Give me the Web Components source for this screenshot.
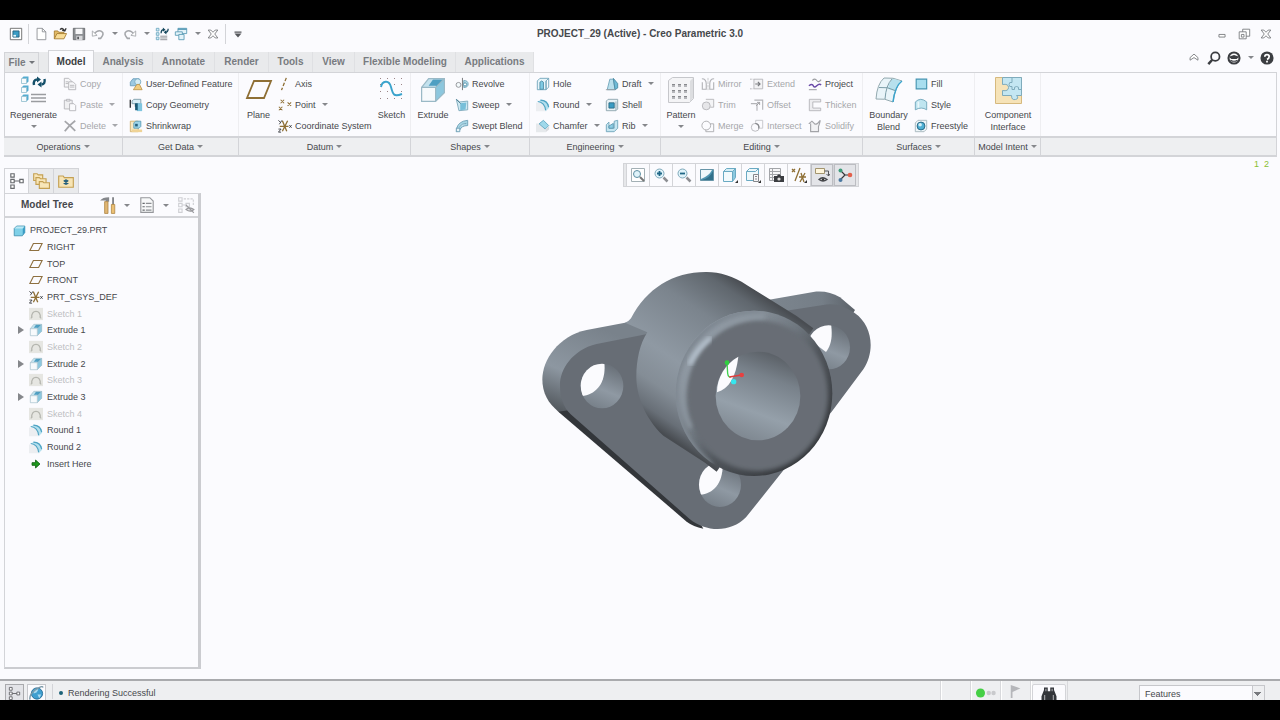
<!DOCTYPE html>
<html lang="en">
<head>
  <meta charset="UTF-8">
  <title>PROJECT_29 (Active) - Creo Parametric 3.0</title>
  <style>
    html, body {
      height: 100%;
      margin: 0;
    }
    body {
      background: #000;
      font: 9px/12px "Liberation Sans", Arial, sans-serif;
      color: #46484c;
      --bg: #fbfbfe;
      --bar: #eeeff1;
      --line: #d3d4d8;
      --muted: #a6a7ab;
    }
  </style>
</head>
<body>
  <cad-app></cad-app>

  <template id="cad-app">
    <style>
      :host {
        display: flex;
        flex-direction: column;
        height: 100vh;
        box-sizing: border-box;
        padding: 20px 0;
        overflow: hidden;
      }
      main {
        flex: 1;
        min-height: 0;
        display: flex;
        background: var(--bg);
      }
      cad-viewport {
        flex: 1;
        min-width: 0;
      }
    </style>
    <cad-titlebar></cad-titlebar>
    <cad-ribbon></cad-ribbon>
    <main>
      <cad-model-tree></cad-model-tree>
      <cad-viewport></cad-viewport>
    </main>
    <cad-status></cad-status>
  </template>

  <template id="cad-titlebar">
    <style>
      :host {
        display: grid;
        grid-template-columns: 1fr auto 1fr;
        align-items: center;
        height: 27px;
        background: var(--bg);
      }
      h1 {
        margin: 0;
        font-size: 10px;
        line-height: 12px;
      }
      div {
        display: flex;
        align-items: center;
      }
      .quick {
        padding-left: 9px;
        gap: 5px;
      }
      .window {
        justify-content: flex-end;
        gap: 8px;
        padding-right: 7px;
      }
      i {
        width: 1px;
        height: 20px;
        background: var(--line);
      }
    </style>
    <div class="quick">
      <cad-tool icon="app" label="Window"></cad-tool>
      <i></i>
      <cad-tool icon="new" label="New"></cad-tool>
      <cad-tool icon="open" label="Open"></cad-tool>
      <cad-tool icon="save" label="Save"></cad-tool>
      <cad-tool icon="undo" label="Undo" menu></cad-tool>
      <cad-tool icon="redo" label="Redo" menu></cad-tool>
      <cad-tool icon="regen" label="Regenerate"></cad-tool>
      <cad-tool icon="windows" label="Windows" menu></cad-tool>
      <cad-tool icon="close" label="Close"></cad-tool>
      <i></i>
      <cad-tool icon="custom" label="Customize"></cad-tool>
    </div>
    <h1>PROJECT_29 (Active) - Creo Parametric 3.0</h1>
    <div class="window">
      <cad-tool icon="minimize" label="Minimize"></cad-tool>
      <cad-tool icon="restore" label="Restore"></cad-tool>
      <cad-tool icon="close" label="Close window"></cad-tool>
    </div>
  </template>

  <template id="cad-tool">
    <style>
      :host {
        display: block;
      }
      button {
        display: flex;
        align-items: center;
        gap: 7px;
        margin: 0;
        padding: 0;
        border: 0;
        background: none;
      }
      .arrow {
        display: none;
        border: 3px solid transparent;
        border-top-color: #85878b;
        border-bottom: 0;
      }
      :host([menu]) .arrow {
        display: block;
      }
    </style>
    <button><cad-icon></cad-icon><span class="arrow"></span></button>
  </template>

  <template id="cad-ribbon">
    <style>
      :host {
        display: block;
        padding: 0 3px 0 4px;
        background: var(--bg);
      }
      .top {
        display: flex;
        height: 25px;
        align-items: flex-end;
      }
      nav {
        display: flex;
        align-items: flex-end;
        background: linear-gradient(var(--bg) 2px, #e9eaec 2px);
      }
      .side {
        display: flex;
        align-items: center;
        align-self: flex-start;
        gap: 6px;
        height: 21px;
        margin-left: auto;
        padding-right: 3px;
      }
      .groups {
        display: flex;
        border: 1px solid var(--line);
        border-bottom: 2px solid var(--line);
      }
      .groups cad-group:first-child {
        margin-left: -1px;
      }
      .rest {
        flex: 1;
        display: flex;
        flex-direction: column;
        justify-content: flex-end;
      }
      .rest::after {
        content: "";
        height: 17px;
        border-top: 2px solid var(--line);
        background: var(--bar);
      }
    </style>
    <div class="top">
      <nav role="tablist">
        <cad-tab file style="--w: 35px">File</cad-tab>
        <cad-tab active style="--w: 46px">Model</cad-tab>
        <cad-tab style="--w: 59px">Analysis</cad-tab>
        <cad-tab style="--w: 62px">Annotate</cad-tab>
        <cad-tab style="--w: 54px">Render</cad-tab>
        <cad-tab style="--w: 44px">Tools</cad-tab>
        <cad-tab style="--w: 42px">View</cad-tab>
        <cad-tab style="--w: 101px">Flexible Modeling</cad-tab>
        <cad-tab style="--w: 78px">Applications</cad-tab>
      </nav>
      <div class="side">
        <cad-tool icon="collapse" label="Minimize the ribbon"></cad-tool>
        <cad-tool icon="search" label="Search"></cad-tool>
        <cad-tool icon="learn" label="Learning Connector" menu></cad-tool>
        <cad-tool icon="help" label="Help"></cad-tool>
      </div>
    </div>
    <div class="groups">
      <cad-group name="Operations">
        <cad-big icon="regenerate" menu style="--w: 59px">Regenerate</cad-big>
        <cad-column style="--w: 60px">
          <cad-command icon="copy" disabled>Copy</cad-command>
          <cad-command icon="paste" disabled menu>Paste</cad-command>
          <cad-command icon="delete" disabled menu>Delete</cad-command>
        </cad-column>
      </cad-group>
      <cad-group name="Get Data">
        <cad-column inset style="--w: 116px">
          <cad-command icon="udf">User-Defined Feature</cad-command>
          <cad-command icon="copygeom">Copy Geometry</cad-command>
          <cad-command icon="shrinkwrap">Shrinkwrap</cad-command>
        </cad-column>
      </cad-group>
      <cad-group name="Datum">
        <cad-big icon="plane" style="--w: 39px">Plane</cad-big>
        <cad-column style="--w: 94px">
          <cad-command icon="axis">Axis</cad-command>
          <cad-command icon="point" menu>Point</cad-command>
          <cad-command icon="csys">Coordinate System</cad-command>
        </cad-column>
        <cad-big icon="sketch" style="--w: 39px">Sketch</cad-big>
      </cad-group>
      <cad-group name="Shapes">
        <cad-big icon="extrude" style="--w: 44px">Extrude</cad-big>
        <cad-column style="--w: 75px">
          <cad-command icon="revolve">Revolve</cad-command>
          <cad-command icon="sweep" menu>Sweep</cad-command>
          <cad-command icon="swept">Swept Blend</cad-command>
        </cad-column>
      </cad-group>
      <cad-group name="Engineering">
        <cad-column inset style="--w: 75px">
          <cad-command icon="hole">Hole</cad-command>
          <cad-command icon="round" menu>Round</cad-command>
          <cad-command icon="chamfer" menu>Chamfer</cad-command>
        </cad-column>
        <cad-column style="--w: 56px">
          <cad-command icon="draft" menu>Draft</cad-command>
          <cad-command icon="shell">Shell</cad-command>
          <cad-command icon="rib" menu>Rib</cad-command>
        </cad-column>
      </cad-group>
      <cad-group name="Editing">
        <cad-big icon="pattern" menu style="--w: 40px">Pattern</cad-big>
        <cad-column style="--w: 49px">
          <cad-command icon="mirror" disabled>Mirror</cad-command>
          <cad-command icon="trim" disabled>Trim</cad-command>
          <cad-command icon="merge" disabled>Merge</cad-command>
        </cad-column>
        <cad-column style="--w: 58px">
          <cad-command icon="extend" disabled>Extend</cad-command>
          <cad-command icon="offset" disabled>Offset</cad-command>
          <cad-command icon="intersect" disabled>Intersect</cad-command>
        </cad-column>
        <cad-column style="--w: 55px">
          <cad-command icon="project">Project</cad-command>
          <cad-command icon="thicken" disabled>Thicken</cad-command>
          <cad-command icon="solidify" disabled>Solidify</cad-command>
        </cad-column>
      </cad-group>
      <cad-group name="Surfaces">
        <cad-big icon="boundary" style="--w: 51px">Boundary<br>Blend</cad-big>
        <cad-column style="--w: 61px">
          <cad-command icon="fill">Fill</cad-command>
          <cad-command icon="style">Style</cad-command>
          <cad-command icon="freestyle">Freestyle</cad-command>
        </cad-column>
      </cad-group>
      <cad-group name="Model Intent">
        <cad-big icon="component" style="--w: 66px">Component<br>Interface</cad-big>
      </cad-group>
      <div class="rest"></div>
    </div>
  </template>

  <template id="cad-tab">
    <style>
      :host {
        display: block;
        width: var(--w);
      }
      button {
        display: flex;
        align-items: center;
        justify-content: center;
        gap: 3px;
        width: 100%;
        height: 20px;
        margin: 0;
        padding: 0;
        border: 0;
        border-right: 1px solid #dfe0e3;
        background: #e9eaec;
        font: bold 10px/12px "Liberation Sans", Arial, sans-serif;
        color: #787b80;
        white-space: nowrap;
      }
      :host([active]) button {
        height: 22px;
        border: 1px solid var(--line);
        border-bottom: 0;
        background: var(--bg);
        color: #3c3e42;
      }
      :host([file]) {
        margin-right: 9px;
      }
      :host([file]) button {
        border: 1px solid var(--line);
        border-bottom: 0;
      }
      :host([file]) button::after {
        content: "";
        border: 3px solid transparent;
        border-top-color: #72757a;
        border-bottom: 0;
      }
    </style>
    <button role="tab"><slot></slot></button>
  </template>

  <template id="cad-group">
    <style>
      :host {
        display: block;
      }
      .body {
        display: flex;
        height: 63px;
        box-shadow: inset -1px 0 #eeeef1;
      }
      button {
        display: flex;
        align-items: center;
        justify-content: center;
        gap: 3px;
        width: 100%;
        height: 19px;
        margin: 0;
        padding: 0;
        border: 0;
        border-top: 2px solid var(--line);
        border-right: 1px solid var(--line);
        background: var(--bar);
        font: 9px/12px "Liberation Sans", Arial, sans-serif;
        color: inherit;
        white-space: nowrap;
      }
      button::after {
        content: "";
        border: 3px solid transparent;
        border-top-color: #85878b;
        border-bottom: 0;
      }
    </style>
    <div class="body"><slot></slot></div>
    <button></button>
  </template>

  <template id="cad-column">
    <style>
      :host {
        display: flex;
        flex-direction: column;
        box-sizing: border-box;
        width: var(--w);
      }
      :host([inset]) {
        padding-left: 6px;
      }
    </style>
    <slot></slot>
  </template>

  <template id="cad-command">
    <style>
      :host {
        display: block;
      }
      button {
        display: flex;
        align-items: center;
        gap: 3px;
        height: 21px;
        margin: 0;
        padding: 0;
        border: 0;
        background: none;
        font: 9px/12px "Liberation Sans", Arial, sans-serif;
        color: inherit;
        white-space: nowrap;
      }
      :host([disabled]) button {
        color: var(--muted);
      }
      :host([menu]) button::after {
        content: "";
        margin-left: 3px;
        border: 3px solid transparent;
        border-top-color: #85878b;
        border-bottom: 0;
      }
      :host([menu][disabled]) button::after {
        border-top-color: var(--muted);
      }
    </style>
    <button><cad-icon></cad-icon><span><slot></slot></span></button>
  </template>

  <template id="cad-big">
    <style>
      :host {
        display: block;
        width: var(--w);
      }
      button {
        display: flex;
        flex-direction: column;
        align-items: center;
        width: 100%;
        margin: 0;
        padding: 3px 0 0;
        border: 0;
        background: none;
        font: 9px/12px "Liberation Sans", Arial, sans-serif;
        color: inherit;
      }
      cad-icon {
        --size: 28px;
        margin-bottom: 5px;
      }
      span {
        white-space: nowrap;
      }
      :host([menu]) button::after {
        content: "";
        margin-top: 4px;
        border: 3px solid transparent;
        border-top-color: #85878b;
        border-bottom: 0;
      }
    </style>
    <button><cad-icon></cad-icon><span><slot></slot></span></button>
  </template>

  <template id="cad-model-tree">
    <style>
      :host {
        display: flex;
        flex-direction: column;
        width: 197px;
        padding: 11px 0 10px 4px;
      }
      .tabs {
        display: flex;
      }
      .tabs cad-tool {
        display: grid;
        place-items: center;
        box-sizing: border-box;
        width: 25px;
        height: 25px;
        border: 1px solid var(--line);
        border-width: 1px 1px 0 0;
        background: #e9eaec;
        --size: 18px;
      }
      .tabs cad-tool:first-child {
        border-left-width: 1px;
        background: var(--bg);
      }
      .panel {
        flex: 1;
        border: 1px solid var(--line);
        border-right: 3px solid #cbccd0;
        border-bottom: 2px solid #cbccd0;
      }
      header {
        display: flex;
        align-items: center;
        gap: 8px;
        height: 22px;
        padding: 0 3px 0 16px;
        border-bottom: 2px solid var(--line);
        --size: 18px;
      }
      h2 {
        flex: 1;
        margin: 0;
        font-size: 10px;
        line-height: 12px;
      }
      ul {
        display: grid;
        grid-auto-rows: 1fr;
        height: 250px;
        margin: 0;
        padding: 4px 0 0 8px;
        list-style: none;
      }
    </style>
    <div class="tabs">
      <cad-tool icon="tree" label="Model Tree"></cad-tool>
      <cad-tool icon="folders" label="Folder Browser"></cad-tool>
      <cad-tool icon="favorites" label="Favorites"></cad-tool>
    </div>
    <div class="panel">
      <header>
        <h2>Model Tree</h2>
        <cad-tool icon="settings" label="Settings" menu></cad-tool>
        <cad-tool icon="show" label="Show" menu></cad-tool>
        <cad-tool icon="hidetree" label="Hide tree"></cad-tool>
      </header>
      <ul role="tree">
        <cad-node root icon="part">PROJECT_29.PRT</cad-node>
        <cad-node icon="datum">RIGHT</cad-node>
        <cad-node icon="datum">TOP</cad-node>
        <cad-node icon="datum">FRONT</cad-node>
        <cad-node icon="csys">PRT_CSYS_DEF</cad-node>
        <cad-node icon="section" hushed>Sketch 1</cad-node>
        <cad-node icon="extrude" parent>Extrude 1</cad-node>
        <cad-node icon="section" hushed>Sketch 2</cad-node>
        <cad-node icon="extrude" parent>Extrude 2</cad-node>
        <cad-node icon="section" hushed>Sketch 3</cad-node>
        <cad-node icon="extrude" parent>Extrude 3</cad-node>
        <cad-node icon="section" hushed>Sketch 4</cad-node>
        <cad-node icon="round">Round 1</cad-node>
        <cad-node icon="round">Round 2</cad-node>
        <cad-node icon="insert">Insert Here</cad-node>
      </ul>
    </div>
  </template>

  <template id="cad-node">
    <style>
      :host {
        display: flex;
        align-items: center;
        gap: 4px;
        white-space: nowrap;
      }
      .twist {
        box-sizing: border-box;
        width: 12px;
        height: 8px;
      }
      :host([parent]) .twist {
        border: 4px solid transparent;
        border-left: 6px solid #85878b;
        border-right: 0;
        width: 6px;
        margin: 0 1px 0 5px;
      }
      :host([root]) .twist {
        display: none;
      }
      :host([root]) {
        --size: 13px;
      }
      :host([hushed]) {
        color: #bdbec2;
      }
    </style>
    <span class="twist"></span>
    <cad-icon></cad-icon>
    <span><slot></slot></span>
  </template>

  <template id="cad-viewport">
    <style>
      :host {
        display: flex;
        flex-direction: column;
      }
      .head {
        display: grid;
        grid-template-columns: 1fr auto 1fr;
        height: 30px;
      }
      .bar {
        grid-column: 2;
        display: flex;
        height: 22px;
        margin-top: 6px;
        padding: 0 2px;
        border: 1px solid var(--line);
        background: #e6e7ea;
      }
      .bar cad-tool {
        display: grid;
        place-items: center;
        width: 22px;
        border-left: 1px solid var(--line);
        background: var(--bg);
        --size: 16px;
      }
      .bar cad-tool[pressed] {
        background: #e3e4e8;
        box-shadow: inset 0 0 0 1px #bcbdc2;
      }
      output {
        justify-self: end;
        padding: 1px 11px 0 0;
        color: #8cbf33;
      }
      svg {
        flex: 1;
        width: 100%;
        min-height: 0;
      }
    </style>
    <div class="head">
      <div class="bar">
        <cad-tool icon="refit" label="Refit"></cad-tool>
        <cad-tool icon="zoomin" label="Zoom In"></cad-tool>
        <cad-tool icon="zoomout" label="Zoom Out"></cad-tool>
        <cad-tool icon="repaint" label="Repaint"></cad-tool>
        <cad-tool icon="shading" label="Display Style"></cad-tool>
        <cad-tool icon="views" label="Saved Orientations"></cad-tool>
        <cad-tool icon="manager" label="View Manager"></cad-tool>
        <cad-tool icon="datums" label="Datum Display Filters"></cad-tool>
        <cad-tool icon="notes" label="Annotation Display" pressed></cad-tool>
        <cad-tool icon="spin" label="Spin Center" pressed></cad-tool>
      </div>
      <output>1&nbsp; 2</output>
    </div>
    <svg viewBox="201 187 1079 492" role="img" aria-label="Flanged bracket">
      <defs>
        <linearGradient id="body" gradientUnits="userSpaceOnUse" x1="650" y1="75" x2="368" y2="500">
          <stop offset="0" stop-color="#494d52"/>
          <stop offset=".08" stop-color="#60676e"/>
          <stop offset=".28" stop-color="#7b848d"/>
          <stop offset=".6" stop-color="#8f99a3"/>
          <stop offset=".78" stop-color="#848d96"/>
          <stop offset=".92" stop-color="#686f77"/>
          <stop offset="1" stop-color="#484c51"/>
        </linearGradient>
        <linearGradient id="rim" gradientUnits="userSpaceOnUse" x1="500" y1="230" x2="850" y2="570">
          <stop offset="0" stop-color="#97a1ab"/>
          <stop offset=".4" stop-color="#6f777f"/>
          <stop offset=".6" stop-color="#50555b"/>
          <stop offset="1" stop-color="#34373b"/>
        </linearGradient>
        <linearGradient id="bore" x1=".75" y1="0" x2=".4" y2="1">
          <stop offset="0" stop-color="#565b61"/>
          <stop offset=".3" stop-color="#78818a"/>
          <stop offset=".7" stop-color="#95a0aa"/>
          <stop offset="1" stop-color="#7f8891"/>
        </linearGradient>
        <linearGradient id="hole" x1=".8" y1="0" x2=".4" y2="1">
          <stop offset="0" stop-color="#656c74"/>
          <stop offset=".6" stop-color="#8f99a3"/>
          <stop offset="1" stop-color="#78818a"/>
        </linearGradient>
        <linearGradient id="lobe" gradientUnits="userSpaceOnUse" x1="200" y1="200" x2="90" y2="470">
          <stop offset="0" stop-color="#79828b"/>
          <stop offset=".55" stop-color="#8d97a1"/>
          <stop offset="1" stop-color="#4c5156"/>
        </linearGradient>
        <linearGradient id="edge" gradientUnits="userSpaceOnUse" x1="720" y1="0" x2="980" y2="0">
          <stop offset="0" stop-color="#7c858e"/>
          <stop offset=".6" stop-color="#757e87"/>
          <stop offset="1" stop-color="#5a6067"/>
        </linearGradient>
        <filter id="soft"><feGaussianBlur stdDeviation="6"/></filter>
        <clipPath id="left"><ellipse cx="216" cy="378" rx="64" ry="67"/></clipPath>
        <clipPath id="right"><ellipse cx="896" cy="262" rx="64" ry="66"/></clipPath>
        <clipPath id="bottom"><ellipse cx="570" cy="674" rx="63" ry="67"/></clipPath>
        <clipPath id="front"><ellipse cx="672" cy="400" rx="235" ry="248"/></clipPath>
      </defs>
      <!-- drawn at three units to the pixel -->
      <g transform="translate(530 260) scale(.33333)">
        <path fill="url(#lobe)" d="M360 175 285 188 170 210C85 228 37 300 37 358C37 400 55 430 85 455L140 480 360 240Z"/>
        <path fill="#33363a" d="M85 455 470 785Q490 800 520 806L500 770 120 450Z"/>
        <path fill="url(#edge)" d="M700 122 850 96C880 92 905 98 930 112L975 150 960 175 760 170Z"/>
        <path fill="#676d75" d="M400 214 352 222 200 252C125 270 90 330 90 375C90 415 100 440 122 463L478 776C530 818 602 818 648 772L780 606 905 455 1000 328C1038 270 1025 195 975 160C945 138 910 128 880 135L730 158Z"/>
        <ellipse cx="216" cy="378" rx="64" ry="67" fill="url(#hole)"/>
        <path clip-path="url(#left)" fill="#fbfbfe" d="M222 300C232 365 200 404 155 408L140 300Z"/>
        <ellipse cx="896" cy="262" rx="64" ry="66" fill="url(#hole)"/>
        <path clip-path="url(#right)" fill="#fbfbfe" d="M903 190C909 235 902 258 888 276L820 225 850 190Z"/>
        <ellipse cx="570" cy="674" rx="63" ry="67" fill="url(#hole)"/>
        <path clip-path="url(#bottom)" fill="#fbfbfe" d="M578 600C582 670 552 700 510 705L480 600Z"/>
        <path fill="url(#body)" d="M285 188Q295 186 303 175C350 85 430 35 530 36C570 36 610 48 650 75L800 168 850 205 560 635 525 608 400 527C340 470 319 400 319 350C319 300 330 250 352 217Z"/>
        <ellipse cx="672" cy="400" rx="235" ry="248" fill="url(#rim)"/>
        <g clip-path="url(#front)">
          <path fill="none" stroke="#808993" stroke-width="26" filter="url(#soft)" d="M540 620C400 500 400 330 520 215Q590 152 690 153"/>
          <ellipse cx="682" cy="407" rx="212" ry="226" fill="#676d75" filter="url(#soft)"/>
          <path fill="none" stroke="#8f99a3" stroke-width="12" stroke-linecap="round" filter="url(#soft)" d="M480 500C440 420 450 320 530 240Q600 168 700 170"/>
          <path fill="none" stroke="#bcc8d4" stroke-width="12" stroke-linecap="round" filter="url(#soft)" d="M480 310Q500 268 540 236"/>
        </g>
        <ellipse cx="684" cy="408" rx="127" ry="133" fill="url(#bore)"/>
        <path fill="#fbfbfe" d="M625 290C618 350 598 385 561 397C560 355 585 312 625 290Z"/>
        <path fill="none" stroke="#3fd14d" stroke-width="4" d="M591 308 593 340Q595 353 602 351"/>
        <path fill="none" stroke="#e23c3c" stroke-width="4" d="M598 351 634 345"/>
        <circle cx="591" cy="308" r="7" fill="#2fd13f"/>
        <circle cx="635" cy="345" r="7" fill="#e84040"/>
        <circle cx="611" cy="365" r="8" fill="#35e6ee"/>
      </g>
    </svg>
  </template>

  <template id="cad-status">
    <style>
      :host {
        display: flex;
        height: 19px;
        border-top: 2px solid #a9aaad;
        background: var(--bar);
        overflow: hidden;
      }
      .left, .cell {
        display: flex;
        align-items: flex-start;
        box-sizing: border-box;
        padding-top: 3px;
      }
      .left {
        flex: 1;
        gap: 3px;
        padding-left: 5px;
      }
      .left cad-tool {
        padding: 1px;
        border: 1px solid #c6c7cb;
        background: var(--bg);
        --size: 15px;
      }
      .left cad-tool:first-child {
        border-color: #a9aaad;
        background: #e3e4e8;
      }
      p {
        display: flex;
        align-items: center;
        gap: 5px;
        margin: 0 0 0 3px;
        padding: 3px 0 0 6px;
        border-left: 1px solid var(--line);
      }
      p::before {
        content: "";
        width: 4px;
        height: 4px;
        border-radius: 50%;
        background: #1a6177;
      }
      .cell {
        justify-content: center;
        width: 30px;
        border-left: 1px solid #d8d9dc;
        box-shadow: inset 1px 0 #fff;
      }
      .cell:last-of-type {
        width: 38px;
        border-right: 1px solid #d8d9dc;
      }
      .find {
        width: 32px;
        display: grid;
        place-items: center;
        border: 1px solid var(--line);
        border-radius: 2px;
        background: var(--bg);
      }
      label {
        padding: 4px 15px 0 71px;
      }
      select {
        appearance: none;
        width: 126px;
        height: 17px;
        margin: 0;
        padding: 0 5px;
        border: 1px solid #c6c7cb;
        border-radius: 0;
        background:
          linear-gradient(135deg, #77797d 50%, transparent 50%) right 2px top 6px / 4px 4px no-repeat,
          linear-gradient(225deg, #77797d 50%, transparent 50%) right 6px top 6px / 4px 4px no-repeat,
          linear-gradient(90deg, #c6c7cb 1px, #eeeff1 1px) right / 12px 100% no-repeat,
          var(--bg);
        font: 9px/12px "Liberation Sans", Arial, sans-serif;
        color: inherit;
      }
    </style>
    <div class="left">
      <cad-tool icon="tree" label="Navigator"></cad-tool>
      <cad-tool icon="browser" label="Browser"></cad-tool>
      <p>Rendering Successful</p>
    </div>
    <div class="cell"></div>
    <div class="cell"><cad-icon name="lights" style="--size: 22px"></cad-icon></div>
    <div class="cell"><cad-icon name="flag" style="--size: 14px"></cad-icon></div>
    <div class="cell"><cad-tool class="find" icon="find" label="Find" style="--size: 20px"></cad-tool></div>
    <label><select aria-label="Selection filter"><option>Features</option><option>Geometry</option><option>Datums</option></select></label>
  </template>

  <script>
    // Every icon sits in a 16 by 16 box, the large ribbon icons in 28 by 28.
    const cube = '<path fill="#c3e2ee" d="M1.500 6.500l4-5h9l-5 5z"/><path fill="#4f9fc2" d="M5.500 5.500l2.500-3.500h6v7l-4.500-3.500z"/><path fill="#8cc7de" d="M9.500 6.500l5-5v8l-5 5z"/><path fill="#f7fafc" d="M1.500 6.500h8v8h-8z"/><path fill="none" stroke="#9ab9c6" stroke-width=".7" d="M1.500 6.500h8v8h-8zl4-5h9v8l-5 5M9.500 6.500l5-5"/>';
    const lens = '<circle cx="6.500" cy="6.500" r="4.500" fill="#dff3fa" stroke="#7fa9ba"/><path stroke="#8c8e92" stroke-width="2.500" d="M10.500 10.500l4 4"/>';
    const folder = '<path fill="#f7e4b4" stroke="#c4a052" d="M1.500 13.500v-10h4l1 1.500h8v8.500z"/>';
    const icons = {
      app: '<path fill="#fff" stroke="#666" d="M1.500 1.500h13v13h-13z"/><path fill="#3a9cc4" stroke="#245f7c" d="M4.500 4.500h7v7h-7z"/><path fill="#e4f3f9" d="M5 9h3v2H5z"/>',
      new: '<path fill="#fff" stroke="#8c8e92" d="M3.500 1.500h6l4 4v9h-10z"/><path fill="none" stroke="#8c8e92" d="M9.500 1.500v4h4"/>',
      open: '<path fill="#e3bc68" stroke="#a67c30" d="M1.500 13.500v-9h4l1 1.500h6v2"/><path fill="#f8dc96" stroke="#a67c30" d="M1.500 13.500l3-6h11l-3 6z"/><path fill="none" stroke="#333" stroke-width="1.500" d="M8 3q3-3 5 1M15 1.500l-1.500 3-3-1"/>',
      save: '<path fill="#8c8f93" stroke="#66686c" d="M1.500 1.500h13v13h-13z"/><path fill="#f7f7f9" d="M4 2h8v6H4z"/><path fill="#d6d7da" d="M5 10h7v5H5z"/><path fill="#55575b" d="M6 11h2v3H6z"/>',
      undo: '<path fill="none" stroke="#a5a7ab" stroke-width="1.800" d="M3 8.500q5-6 9-3.500t-1 8H8"/><path fill="#fff" stroke="#a5a7ab" d="M1.500 4.500v6l5.500-1z"/>',
      redo: '<path fill="none" stroke="#a5a7ab" stroke-width="1.800" d="M13 8.500q-5-6-9-3.500t1 8h3"/><path fill="#fff" stroke="#a5a7ab" d="M14.500 4.500v6L9 9.500z"/>',
      regen: '<g fill="#d5edf6" stroke="#6ea9c2"><path d="M1.500 1.500h3v3h-3zM1.500 6.500h3v3h-3zM1.500 11.500h3v3h-3z"/></g><path stroke="#85878b" d="M6 10.500h8M6 12.500h8M6 14.500h8"/><path fill="none" stroke="#14465c" stroke-width="1.500" d="M7 7q0-4 3-4M12 6q3 0 3-4"/><path fill="#14465c" d="M9 .5L12 3 9 5.500zM13 3.500v5L10 6z"/>',
      windows: '<g fill="#e3f3f9" stroke="#5c9bb6"><path d="M4.500 1.500h10v6h-10z"/><path d="M1.500 5.500h8v4h-8z"/><path d="M5.500 8.500h6v6h-6z"/></g><path stroke="#4c94b2" stroke-width="1.500" d="M4.500 2.500h10"/>',
      close: '<path fill="#fff" stroke="#77797d" d="M2.500 3.500h3L8 6l2.500-2.500h3L10 8l3.500 4.500h-3L8 10l-2.500 2.500h-3L6 8z"/>',
      custom: '<path fill="#55575b" d="M4 5h8v1.500H4zM4 7.500h8L8 12z"/>',
      minimize: '<path fill="#fff" stroke="#77797d" d="M4.500 8.500h7v3h-7z"/>',
      restore: '<path fill="#fff" stroke="#77797d" d="M6.500 2.500h8v8h-8z"/><path fill="#fff" stroke="#77797d" d="M2.500 5.500h8v8h-8z"/><path fill="none" stroke="#77797d" d="M5 8.500h3v3H5z"/>',
      collapse: '<path fill="#fff" stroke="#77797d" d="M8 3.500l4.500 4v3L8 7.500l-4.500 3v-3z"/>',
      search: '<circle cx="9.500" cy="6.500" r="4.800" fill="none" stroke="#3b3d41" stroke-width="2"/><path stroke="#3b3d41" stroke-width="2.800" d="M6 10l-4.500 5"/>',
      learn: '<circle cx="8" cy="8" r="6.300" fill="#fff" stroke="#3b3d41" stroke-width="2.400"/><path fill="#3b3d41" d="M2 6.500l6-2 6 2-3 2.500H5z"/><path fill="none" stroke="#3b3d41" stroke-width="1.300" d="M4 10.500q4 2.500 8 0"/>',
      help: '<circle cx="8" cy="8" r="7.500" fill="#3b3d41"/><path fill="none" stroke="#fff" stroke-width="2" d="M5.500 6.500q0-2.500 2.500-2.500t2.500 2.300T8 9.500M8 11v2"/>',
      regenerate: '<g fill="#54acd0"><path d="M6.500 7.500l2-2v-5h-5l-2 2h5zM6.500 16.500l2-2v-5h-5l-2 2h5zM6.500 25.500l2-2v-5h-5l-2 2h5z"/></g><g fill="#f6fbfd" stroke="#8fbccd" stroke-width=".8"><path d="M1.500 2.500h5v5h-5zM1.500 11.500h5v5h-5zM1.500 20.500h5v5h-5z"/></g><path stroke="#9a9ca0" stroke-width="1.300" d="M11 18.500h15M11 22h15M11 25.500h15"/><path fill="none" stroke="#15506a" stroke-width="2.400" d="M14 9q-1-5 3-5.500M24.500 3q1 5-3 5.500"/><path fill="#15506a" d="M17 .5l4 3-4 3zM21.500 5.500v6l-4-3z"/>',
      copy: '<g fill="#f7f7f9" stroke="#b3b4b8"><path d="M1.500 1.500h5l3 3v7h-8z"/><path d="M6.500 5.500h5l3 3v6h-8z"/><path d="M8 9.500h5M8 11.500h5M3 5.500h3M3 7.500h3"/></g>',
      paste: '<g fill="#f0f0f2" stroke="#b3b4b8"><path d="M1.500 2.500h9v10h-9z"/><path d="M4 1.500h4v2H4z"/><path fill="#fbfbfd" d="M7.500 6.500h5l2 2v6h-7z"/></g>',
      delete: '<path stroke="#a5a6aa" stroke-width="2" d="M2 2.500q5 4 12 11M14 2Q7 7 2 14"/>',
      udf: '<path fill="#9cc9e2" stroke="#6a9dba" d="M1.500 6l3-4h7v8h-10z"/><circle cx="10" cy="5.500" r="3.500" fill="#d3ecf6" stroke="#78a9c0"/><path fill="#f2cd80" stroke="#bf9850" d="M5 14.500l4-6h3l3 6z"/>',
      copygeom: '<path stroke="#33363a" stroke-width="1.600" d="M1.500 2v9M7.500 4v6"/><path fill="#d8edf5" stroke="#7d9ba8" d="M3.500 3.500l2-2h8v5h-10z"/><path fill="#7fc5df" d="M9 6h6v9H9z"/><path fill="#1b5a75" d="M7 6h3v8H7z"/>',
      shrinkwrap: '<path fill="#f8e8c2" stroke="#cfae6c" d="M1.500 2.500h9v12h-9z"/><path fill="#9fd5ea" stroke="#5a9bb6" d="M5.500 4.500l2-2h6v6l-2 2h-6z"/><path fill="#245f7c" d="M7 5.500h3v3H7z"/><path fill="#efd396" d="M3 12h12v3H3z"/>',
      plane: '<path fill="none" stroke="#8e6f35" stroke-width="1.800" d="M9 5h17l-7 17H2z"/>',
      datum: '<path fill="none" stroke="#8e7040" stroke-width="1.300" d="M5 4h10l-4 8H1z"/>',
      axis: '<path stroke="#8e6f35" stroke-width="1.500" stroke-dasharray="4 2" d="M9.500 1L4 15"/>',
      point: '<path stroke="#8e6f35" stroke-width="1.200" d="M3 2l4 4M7 2L3 6M11 5l4 4M15 5l-4 4M1 10l4 4M5 10l-4 4"/>',
      csys: '<path stroke="#8e6f35" stroke-width="1.500" d="M2 8.500h10M5 2l5 12M11 2L5 14"/><path fill="none" stroke="#33363a" d="M.5 1.500l2 2M4.500 1.500L1.500 6M.5 11.500h3l-3 3.500h3M13 7l2.500 3M15.500 7L13 10"/>',
      sketch: '<path fill="none" stroke="#3aa3cc" stroke-width="1.900" d="M3 11c1-6 8-8 10 0s3 10 11 7"/><g fill="#9b8486"><path d="M2 2h1v1H2zM9 2h1v1H9zM16 2h1v1h-1zM23 2h1v1h-1zM2 8h1v1H2zM16 8h1v1h-1zM23 8h1v1h-1zM2 15h1v1H2zM9 15h1v1H9zM23 15h1v1h-1zM2 22h1v1H2zM9 22h1v1H9zM16 22h1v1h-1zM23 22h1v1h-1z"/></g>',
      extrude: cube,
      revolve: '<path fill="#b5dcea" stroke="#6ea4b9" d="M10 4q5 0 5 4t-5 4z"/><circle cx="4" cy="9" r="2.800" fill="#f4fafc" stroke="#8c8e92"/><path stroke="#66686c" d="M8.500 1v14"/><circle cx="11.500" cy="8.500" r="1.800" fill="#fff" stroke="#4b8aa3"/>',
      sweep: '<path fill="#cfe9f2" stroke="#7aa7b9" d="M1.500 1.500l4 3 9-1v10l-10 1z"/><path fill="#78bfd9" d="M6 6l7-1-1 8-6 1z"/><path stroke="#4b7a8d" d="M1.500 1.500l5 5"/>',
      swept: '<path fill="#a9d7e6" stroke="#6a9db3" d="M1.500 14.500q0-9 8-12l5-1v6q-7 0-9 5z"/><path fill="#e9f5f9" stroke="#6a9db3" d="M1.500 10.500h4v4h-4zM5 9q3-4 8-4"/>',
      hole: '<path fill="#e7f5fa" stroke="#6ea4b9" d="M1.500 4.500l3-3h10l-3 3v10h-10z"/><path fill="#7fcbe4" stroke="#4b8aa3" d="M4.500 6q2-3 4 0v8h-4z"/><path stroke="#6ea4b9" d="M11.500 4.500v10l3-3v-10"/>',
      round: '<path fill="#eceef1" d="M0 5h8l4 4v6H0z"/><path fill="#b4e0ee" d="M2 4l4-2q9 1 9 9l-4 4q0-9-9-11z"/><path fill="none" stroke="#4fa3c3" stroke-width="1.300" d="M5 2.500q8 0 9.500 8M2 4q8 1 9 10"/>',
      chamfer: '<path fill="#e6e9ec" d="M0 5h6l5 4v6H0z"/><path fill="#9fd8ea" stroke="#5fa6c0" d="M3.500 5.500l5-4 6 6-4 4z"/><path fill="#d9dbde" d="M11 12l4-4v4l-4 3z"/>',
      draft: '<path fill="#b9dfec" stroke="#6ea4b9" d="M5.500 2.500h4l2 12h-9z"/><path fill="#6fbbd6" stroke="#4b8aa3" d="M9.500 1.500l5 6v5l-3 2z"/><path stroke="#9a9ca0" d="M1 14.500h11"/>',
      shell: '<path fill="#e7f1f5" stroke="#8aa2ac" d="M1.500 3.500l2-2h11v11l-2 2h-11z"/><path fill="#3a9cc4" stroke="#2b6a84" d="M4.500 5.500h6v6h-6z"/><path stroke="#8aa2ac" d="M12.500 4v10"/>',
      rib: '<path fill="#c6e6f1" stroke="#6ea4b9" d="M1.500 6.500l3-3v7h6v-8l4-1v9l-4 4h-9z"/><path fill="#8ccde4" stroke="#5a96ae" d="M4.500 8l5-3v5.500h-5z"/>',
      pattern: '<path fill="#f4f4f6" stroke="#c6c7cb" d="M1.500 4.500l4-3h21v21l-4 4h-21z"/><path fill="#dcdde0" d="M23 5l3-3v20l-3 4z"/><g fill="#b5b6ba"><path d="M5 8h3v3H5zM11 8h3v3h-3zM17 8h3v3h-3zM5 14h3v3H5zM11 14h3v3h-3zM17 14h3v3h-3zM5 20h3v3H5zM11 20h3v3h-3zM17 20h3v3h-3z"/></g><path stroke="#88898d" d="M5 8.500h3M11 8.500h3M17 8.500h3M5 14.500h3M11 14.500h3M17 14.500h3M5 20.500h3M11 20.500h3M17 20.500h3"/>',
      mirror: '<path fill="none" stroke="#b3b4b8" stroke-width="1.300" d="M1 2q5 0 5 6v6H1.500V6M15 2q-5 0-5 6v6h4.500V6"/><path stroke="#c2c3c7" stroke-dasharray="3 1" d="M8 1v14"/>',
      trim: '<path fill="#f4f4f6" stroke="#b3b4b8" d="M5.500 1.500h9v9h-4"/><circle cx="6" cy="9" r="4.500" fill="#e6e6e9" stroke="#b3b4b8"/>',
      merge: '<circle cx="6" cy="7.500" r="5" fill="none" stroke="#a8a9ad"/><path fill="none" stroke="#a8a9ad" d="M10.500 5.500h4v9h-9v-2"/>',
      extend: '<path fill="#f2f2f4" stroke="#b3b4b8" d="M4.500 2.500h10v11h-10z"/><path stroke="#77797d" stroke-width="1.300" d="M6 8h5M9 5.500L11.500 8 9 10.500"/><path stroke="#b3b4b8" stroke-dasharray="2 1" d="M0 2.500h4M0 13.500h4"/>',
      offset: '<path fill="none" stroke="#b3b4b8" stroke-width="1.300" d="M5 2.500h9.500v11M1 6.500h7v8"/><path stroke="#99999d" d="M7 9l4-4M8 5h3v3"/>',
      intersect: '<circle cx="6" cy="9.500" r="4.500" fill="none" stroke="#b3b4b8"/><path fill="none" stroke="#c2c3c7" d="M6.500 4V1.500h8v9h-3"/><path fill="none" stroke="#88898d" stroke-width="1.500" d="M6 5q5 1 4 6"/>',
      project: '<path fill="none" stroke="#9a9ca0" stroke-width="1.300" d="M5 4q3-3 5 0t5-1"/><path fill="none" stroke="#6a4aa8" stroke-width="1.700" d="M1 10q4-3 5 0 1 3 4 0t5-1"/><path stroke="#8c8e92" d="M1 14.500h9"/>',
      thicken: '<path fill="#ededf0" stroke="#b3b4b8" d="M1.500 1.500h13v3h-9v7h9v3h-13z"/>',
      solidify: '<path fill="#f2f2f4" stroke="#a3a4a8" stroke-width="1.300" d="M1.500 5l3-2.500L8 6q3 0 6-4.500-1 5-2 7v6h-9v-9z"/>',
      boundary: '<path fill="#e9f4f9" stroke="#93a9af" d="M1 23Q2 8 9 2q9-1 18 3-7 5-9 21-8-4-17-3z"/><path fill="#b7e0ed" d="M17 3q6 0 9 2.500-4 3-6 9.500l-7-2q1-6 4-10z"/><path fill="none" stroke="#7b9da8" d="M17 3q-6 6-7 20M4 11.500q9-1 16 3"/><path fill="none" stroke="#3aa3cc" stroke-width="1.500" d="M27 5q-7 5-9 21"/>',
      fill: '<path fill="#a8deef" stroke="#4594b1" stroke-width="1.300" d="M2.500 2.500h12v11h-12z"/>',
      style: '<path fill="#bfe5f0" stroke="#6ea4b9" d="M1.500 13.500v-9q6-6 13 0v9q-6-4-13 0z"/><path stroke="#eaf7fb" stroke-width="2" d="M5 4v7"/>',
      freestyle: '<path fill="#eef5f8" stroke="#a4b3b9" d="M1.500 4.500l3-3h10v10l-3 3h-10z"/><circle cx="8" cy="8" r="4.500" fill="#4fb0d4" stroke="#215f7c"/><circle cx="7" cy="6.500" r="2" fill="#d3eff8"/>',
      component: '<path fill="#f6e3b8" stroke="#d6b97e" d="M1.500 1.500h26v26h-26z"/><path fill="#c3e6f2" stroke="#7fabbc" d="M8.500 1.500h19v18h-5q3 3-1 4t-4-4h-9v-5q6 1 6-3t-6-3z"/><path fill="none" stroke="#7fabbc" d="M18 1.500v5q-3-1-3 2t3 2v3h2.500q-1-3 2-3t2 3h3"/>',
      tree: '<path fill="#fff" stroke="#66686c" d="M2.500 1.500h3v3h-3zM2.500 6.500h3v3h-3zM2.500 11.500h3v3h-3zM10.500 6.500h3v3h-3zM5.500 8h5"/>',
      folders: '<g fill="#f8e6b8" stroke="#c4a052"><path d="M1.500 7.500v-6h3l1 1h4v5z"/><path d="M3.500 11v-6h3l1 1h5v5z"/><path d="M6.500 14.500v-6h3l1 1h5v5z"/></g>',
      favorites: folder + '<path stroke="#245f7c" stroke-width="1.300" d="M8 6.500v5M6 7.500l4 3M10 7.500l-4 3"/>',
      settings: '<path fill="#85878b" d="M1 4q2-3 8-3v4H6V4z"/><path fill="#e0b673" stroke="#ad8642" stroke-width=".7" d="M5 5h3v10.500H5z"/><path stroke="#77797d" stroke-width="1.500" d="M12.500 1v7"/><path fill="#ecc073" stroke="#ad8642" stroke-width=".7" d="M11 7.500h3v8h-3z"/>',
      show: '<path fill="#f7f8f9" stroke="#95979b" d="M2.500 1.500h8l3 3v10h-11z"/><path stroke="#8c8e92" d="M7 6.500h5M7 9.500h5M7 12.500h5"/><path fill="#66686c" d="M4 6h2v1H4zM4 9h2v1H4zM4 12h2v1H4z"/>',
      hidetree: '<path fill="none" stroke="#cfd0d4" d="M1.500 1.500h3v3h-3zM1.500 6.500h3v3h-3zM1.500 11.500h3v3h-3zM8 6.500h3v3H8zM4.500 8H8"/><path stroke="#cfd0d4" stroke-dasharray="2 1" d="M6 2.500h9M14.500 3v5"/><path fill="#e1e1e4" stroke="#99999d" d="M8 12q3-3 7 0-3 3-7 0zM8 8l7 7"/>',
      part: '<path fill="#7fd0e8" stroke="#3b8dac" d="M1.500 5.500l3-3h10v8l-3 4h-10z"/><path fill="#bfe9f5" d="M2 5.500L4.500 3H14l-2.500 2.500z"/><path fill="#3a9cc4" d="M12 6l2.500-3v7.500L12 13.500z"/>',
      section: '<path fill="#e6e6e2" d="M0 1h16v14H0z"/><path fill="none" stroke="#b5b6b0" stroke-width="1.300" d="M3 12q0-7 5-7t5 7M2 13l2-2M14 13l-2-2"/>',
      insert: '<path fill="#1e9a1e" stroke="#0f5f10" d="M3.500 6.500h4v-3l5 4.500-5 4.500v-3h-4z"/>',
      refit: '<path fill="#fff" stroke="#a3b0b5" d="M1.500 1.500h13v13h-13z"/><circle cx="7" cy="7" r="3.500" fill="#dff3fa" stroke="#5d8fa3"/><path stroke="#777" stroke-width="2" d="M10 10l4 4"/>',
      zoomin: lens + '<path stroke="#1f6787" stroke-width="1.800" d="M4 6.500h5M6.500 4v5"/>',
      zoomout: lens + '<path stroke="#1f6787" stroke-width="1.800" d="M4 6.500h5"/>',
      repaint: '<path fill="#4f95b0" stroke="#6795a8" d="M1.500 2.500h13v11h-13z"/><path fill="#eef7fa" d="M2 12V3h11Q10 9 2 12z"/><path fill="#31708a" d="M3 13q8-2 11-9v9z"/>',
      shading: '<path fill="#d5eef6" stroke="#6aaac3" d="M1.500 4.500l3-3h9l-3 3z"/><path fill="#8cc9df" stroke="#6aaac3" d="M10.500 4.500l3-3v9l-3 4z"/><path fill="#f3fafc" stroke="#6aaac3" d="M1.500 4.500h9v10h-9z"/><path fill="#333" d="M16 13v3h-3z"/>',
      views: '<path fill="#eef8fb" stroke="#6aaac3" d="M1.500 4.500l3-3h9v9l-3 3h-9z"/><path fill="none" stroke="#6aaac3" d="M1.500 4.500h9l3-3"/><path fill="#f7f7f9" stroke="#85878b" d="M8.500 7.500h5v7h-5zM10 9.500h2M10 12h2"/><path fill="#333" d="M16 13v3h-3z"/>',
      manager: '<path fill="#f7f7f9" stroke="#a3a5a9" d="M1.500 1.500h11v12h-11zM1.500 4.500h11M1.500 7.500h11M1.500 10.500h6M4.500 1.500v12"/><path fill="#3b3d41" d="M6 9h3l1-1.500h2L13 9h3v6H6z"/><circle cx="11" cy="12" r="1.600" fill="#ddd"/>',
      datums: '<path stroke="#8e6f35" stroke-width="1.300" d="M1 2l3 3M4 2L1 5M9 1L4 14M8 10h7M10 6l3 9M14 6l-5 9"/><path fill="#333" d="M16 13v3h-3z"/>',
      notes: '<path fill="#fff6dc" stroke="#a3956f" d="M1.500 1.500h9v5h-9z"/><path fill="none" stroke="#55575b" d="M10.500 4h4v5M12.500 7l2 2 1.500-2"/><path fill="#fff" stroke="#44464a" stroke-width="1.300" d="M5 12.500q3.500-3.500 8 0-4 3-8 0z"/><circle cx="9" cy="12.500" r="1.300" fill="#333"/>',
      spin: '<path stroke="#33363a" stroke-width="1.200" d="M3.500 3.500L8 8l-5 5M8 8h5"/><circle cx="3.500" cy="3.500" r="2" fill="#3c9c7a"/><circle cx="13" cy="8" r="2.300" fill="#e2604c"/><circle cx="3.500" cy="13" r="2" fill="#4a78a0"/>',
      browser: '<circle cx="8.500" cy="8" r="6" fill="#3f9fd0" stroke="#2a6f98"/><path fill="#a8daf0" d="M5 5q3-3 5-1l-2 3-3 1zM9 9h4l-2 4z"/><path fill="none" stroke="#7d9aa8" stroke-width="1.500" d="M1 14.500Q0 9 7 4t8-2.500"/>',
      lights: '<circle cx="4" cy="6.500" r="3.300" fill="#45cf45"/><circle cx="10" cy="6.500" r="1.600" fill="#c9cacd"/><circle cx="13.500" cy="6.500" r="1.600" fill="#c9cacd"/>',
      flag: '<path fill="#b5b6ba" d="M2 1l11 4-9 4v7H2z"/>',
      find: '<path fill="#33363a" d="M2 16V9l2-5V2h3v3h2V2h3v2l2 5v7H9v-4H7v4z"/><path fill="#9a9ca0" d="M4 8h1v7H4zM11 8h1v7h-1zM5 3h1v2H5zM10 3h1v2h-1z"/>'
    };
    const large = ['regenerate', 'plane', 'sketch', 'pattern', 'boundary', 'component'];

    class CadElement extends HTMLElement {
      constructor() {
        super();
        const template = document.getElementById(this.localName);
        this.attachShadow({mode: 'open'});
        this.shadowRoot.appendChild(template.content.cloneNode(true));
      }
      connectedCallback() {
        const icon = this.shadowRoot.querySelector('cad-icon:not([name])');
        if (icon && this.hasAttribute('icon')) {
          icon.setAttribute('name', this.getAttribute('icon'));
        }
      }
    }

    class CadIcon extends HTMLElement {
      static get observedAttributes() {
        return ['name'];
      }
      constructor() {
        super();
        this.attachShadow({mode: 'open'});
      }
      attributeChangedCallback() {
        const name = this.getAttribute('name');
        const box = large.includes(name) ? 28 : 16;
        this.shadowRoot.innerHTML = `
          <style>
            :host { display: block; flex: none; width: var(--size, 14px); height: var(--size, 14px); }
            svg { display: block; width: 100%; height: 100%; }
          </style>
          <svg viewBox="0 0 ${box} ${box}" fill="none" aria-hidden="true">${icons[name]}</svg>`;
      }
    }

    class CadTool extends CadElement {
      connectedCallback() {
        super.connectedCallback();
        const button = this.shadowRoot.querySelector('button');
        button.setAttribute('aria-label', this.getAttribute('label'));
        if (this.hasAttribute('pressed')) {
          button.setAttribute('aria-pressed', 'true');
        }
      }
    }

    class CadTab extends CadElement {
      connectedCallback() {
        this.shadowRoot.querySelector('button').setAttribute('aria-selected', this.hasAttribute('active'));
      }
    }

    class CadGroup extends CadElement {
      connectedCallback() {
        this.shadowRoot.querySelector('button').textContent = this.getAttribute('name');
      }
    }

    class CadCommand extends CadElement {
      connectedCallback() {
        super.connectedCallback();
        this.shadowRoot.querySelector('button').disabled = this.hasAttribute('disabled');
      }
    }

    class CadNode extends CadElement {
      connectedCallback() {
        super.connectedCallback();
        this.setAttribute('role', 'treeitem');
      }
    }

    customElements.define('cad-icon', CadIcon);
    customElements.define('cad-tool', CadTool);
    customElements.define('cad-tab', CadTab);
    customElements.define('cad-column', class extends CadElement {});
    customElements.define('cad-command', CadCommand);
    customElements.define('cad-big', class extends CadElement {});
    customElements.define('cad-group', CadGroup);
    customElements.define('cad-node', CadNode);
    customElements.define('cad-titlebar', class extends CadElement {});
    customElements.define('cad-ribbon', class extends CadElement {});
    customElements.define('cad-model-tree', class extends CadElement {});
    customElements.define('cad-viewport', class extends CadElement {});
    customElements.define('cad-status', class extends CadElement {});
    customElements.define('cad-app', class extends CadElement {});
  </script>
</body>
</html>
